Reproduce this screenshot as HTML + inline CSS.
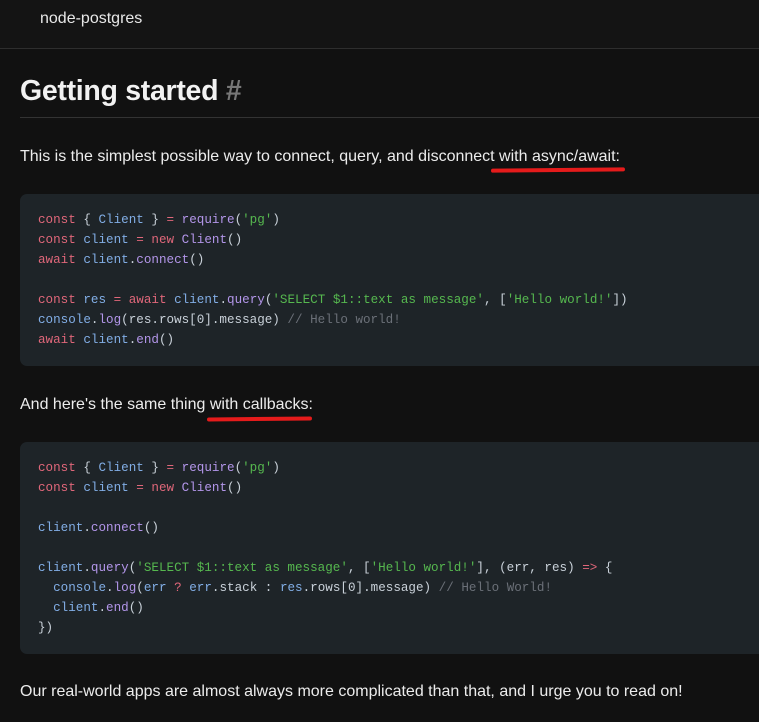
<!DOCTYPE html>
<html><head><meta charset="utf-8"><style>
*{margin:0;padding:0;box-sizing:border-box}
body{width:759px;height:722px;background:#111111;color:#ececec;font-family:"Liberation Sans",sans-serif;overflow:hidden;position:relative}
.hdr{position:absolute;left:0;top:0;width:759px;height:49px;background:#141414;border-bottom:1px solid #2e2e2e}
.hdr span{position:absolute;left:40px;top:10px;font-size:16px;color:#e8e8e8}
h1{position:absolute;left:20px;top:75px;font-size:28.5px;font-weight:bold;color:#f2f2f2;letter-spacing:-0.3px}
h1 .h{color:#777;font-weight:bold}
.hr{position:absolute;left:20px;right:0;top:117px;border-top:1px solid #333}
p{position:absolute;left:20px;font-size:16px;color:#ececec;white-space:nowrap}
pre{position:absolute;left:20px;width:760px;background:#1e2428;border-radius:7px 0 0 7px;padding:16px 18px;font-family:"Liberation Mono",monospace;font-size:12.6px;line-height:20px;color:#c9d1d9}
.k{color:#e0677a}.v{color:#82aee6}.f{color:#b396ea}.s{color:#56b84f}.c{color:#6b7078}
.u{position:absolute;height:4px;background:#e51b1b;border-radius:3px;transform:rotate(-0.6deg)}
</style></head><body>
<div class="hdr"><span>node-postgres</span></div>
<h1>Getting started <span class="h">#</span></h1>
<div class="hr"></div>
<p style="top:148px">This is the simplest possible way to connect, query, and disconnect with async/await:</p>
<div class="u" style="left:491px;top:168px;width:134px"></div>
<pre style="top:194px;height:172px"><span class="k">const</span> { <span class="v">Client</span> } <span class="k">=</span> <span class="f">require</span>(<span class="s">'pg'</span>)
<span class="k">const</span> <span class="v">client</span> <span class="k">=</span> <span class="k">new</span> <span class="f">Client</span>()
<span class="k">await</span> <span class="v">client</span>.<span class="f">connect</span>()

<span class="k">const</span> <span class="v">res</span> <span class="k">=</span> <span class="k">await</span> <span class="v">client</span>.<span class="f">query</span>(<span class="s">'SELECT $1::text as message'</span>, [<span class="s">'Hello world!'</span>])
<span class="v">console</span>.<span class="f">log</span>(res.rows[0].message) <span class="c">// Hello world!</span>
<span class="k">await</span> <span class="v">client</span>.<span class="f">end</span>()</pre>
<p style="top:396px">And here's the same thing with callbacks:</p>
<div class="u" style="left:207px;top:417px;width:105px"></div>
<pre style="top:442px;height:212px"><span class="k">const</span> { <span class="v">Client</span> } <span class="k">=</span> <span class="f">require</span>(<span class="s">'pg'</span>)
<span class="k">const</span> <span class="v">client</span> <span class="k">=</span> <span class="k">new</span> <span class="f">Client</span>()

<span class="v">client</span>.<span class="f">connect</span>()

<span class="v">client</span>.<span class="f">query</span>(<span class="s">'SELECT $1::text as message'</span>, [<span class="s">'Hello world!'</span>], (err, res) <span class="k">=&gt;</span> {
  <span class="v">console</span>.<span class="f">log</span>(<span class="v">err</span> <span class="k">?</span> <span class="v">err</span>.stack : <span class="v">res</span>.rows[0].message) <span class="c">// Hello World!</span>
  <span class="v">client</span>.<span class="f">end</span>()
})</pre>
<p style="top:683px">Our real-world apps are almost always more complicated than that, and I urge you to read on!</p>
</body></html>
